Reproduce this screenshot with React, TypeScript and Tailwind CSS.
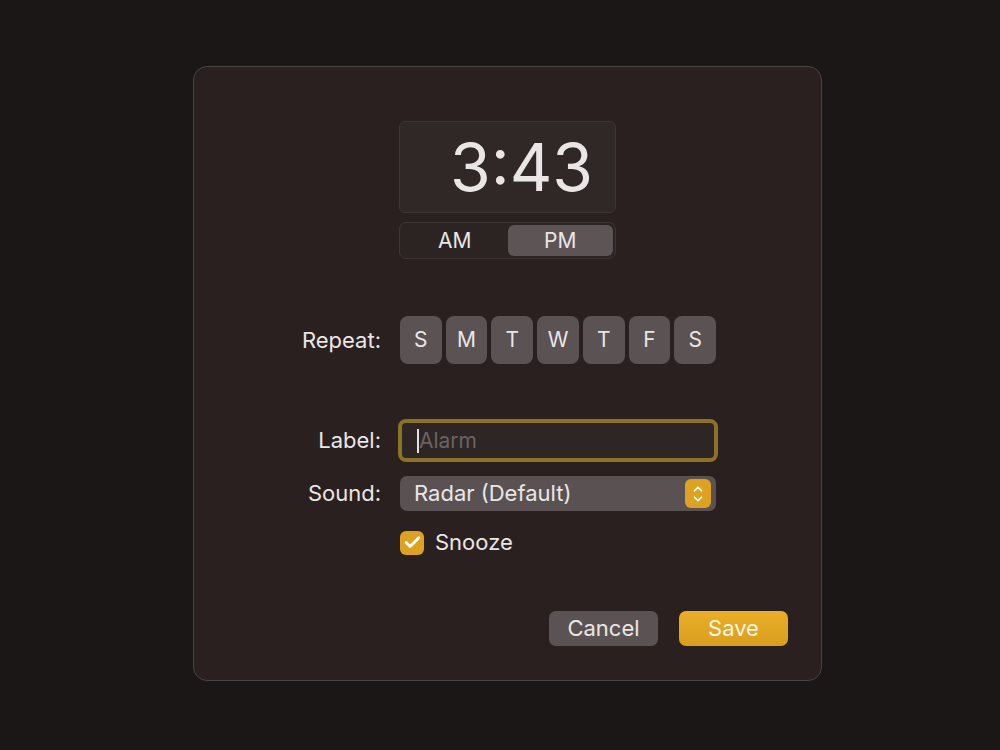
import { Check, ChevronDown, ChevronUp } from "lucide-react";

const days = ["S", "M", "T", "W", "T", "F", "S"];

export default function App() {
  return (
    <div
      className="flex h-[750px] w-full items-center justify-center bg-[#1b1717] pb-[3px] pl-[15px] text-[#ebe6e6]"
      style={{ fontFamily: "Inter, 'Liberation Sans', sans-serif" }}
    >
      <div className="flex h-[615px] w-[629px] flex-col rounded-[14px] border border-[#4a4343] bg-[#2a2020] pt-[54px] pr-[33px] pb-[34px] font-normal">
        <div className="flex flex-col items-center pl-[33px]">
          <div className="flex h-[92px] w-[217px] items-center justify-center rounded-[6px] border border-[#3d3434] bg-[#302727] pl-[28px]">
            <span className="text-[66px] leading-none font-normal">3:43</span>
          </div>
          <div className="mt-[9px] flex h-[37px] w-[217px] rounded-[7px] border border-[#3d3434] bg-[#2c2323] p-[2px]">
            <div className="flex flex-1 items-center justify-center text-[21px]">AM</div>
            <div className="flex flex-1 items-center justify-center rounded-[6px] bg-[#5d5555] text-[21px]">PM</div>
          </div>
        </div>

        <div className="mt-[57px] grid grid-cols-[187px_316px] items-center gap-x-[19px]">
          <div className="text-right text-[22px]">Repeat:</div>
          <div className="flex gap-[4px]">
            {days.map((d, i) => (
              <div
                key={i}
                className="flex h-[48px] w-[42px] items-center justify-center rounded-[8px] bg-[#5b5353] text-[21px]"
              >
                {d}
              </div>
            ))}
          </div>

          <div className="mt-[55px] text-right text-[22px]">Label:</div>
          <div className="mt-[55px] -mx-[2px] flex h-[43px] items-center rounded-[8px] border-[4px] border-[#8c7226] bg-[#2e2525] pl-[15px]">
            <span className="h-[24px] w-[2px] bg-[#e6e0e0]" />
            <span className="text-[21px] text-[#6b6262]">Alarm</span>
          </div>

          <div className="mt-[14px] text-right text-[22px]">Sound:</div>
          <div className="mt-[14px] flex h-[35px] items-center justify-between rounded-[7px] bg-[#5a5252] pr-[5px] pl-[14px]">
            <span className="text-[22px]">Radar (Default)</span>
            <div className="flex h-[29px] w-[26px] flex-col items-center justify-center rounded-[6px] bg-[#dea222] text-white">
              <ChevronUp size={14} strokeWidth={3} className="-mb-[2px]" />
              <ChevronDown size={14} strokeWidth={3} className="-mt-[2px]" />
            </div>
          </div>

          <div className="mt-[15px]" />
          <div className="mt-[15px] flex items-center gap-[11px]">
            <div className="flex h-[24px] w-[24px] items-center justify-center rounded-[6px] bg-[#dea222]">
              <Check size={19} strokeWidth={3.5} className="text-white" />
            </div>
            <span className="text-[22px]">Snooze</span>
          </div>
        </div>

        <div className="mt-auto flex justify-end gap-[21px]">
          <button className="h-[35px] w-[109px] rounded-[7px] bg-[#5b5353] text-[22px] text-[#ebe6e6]">
            Cancel
          </button>
          <button className="h-[35px] w-[109px] rounded-[7px] bg-gradient-to-b from-[#eaae28] to-[#d99e1c] text-[22px] text-[#fbf4e4]">
            Save
          </button>
        </div>
      </div>
    </div>
  );
}
